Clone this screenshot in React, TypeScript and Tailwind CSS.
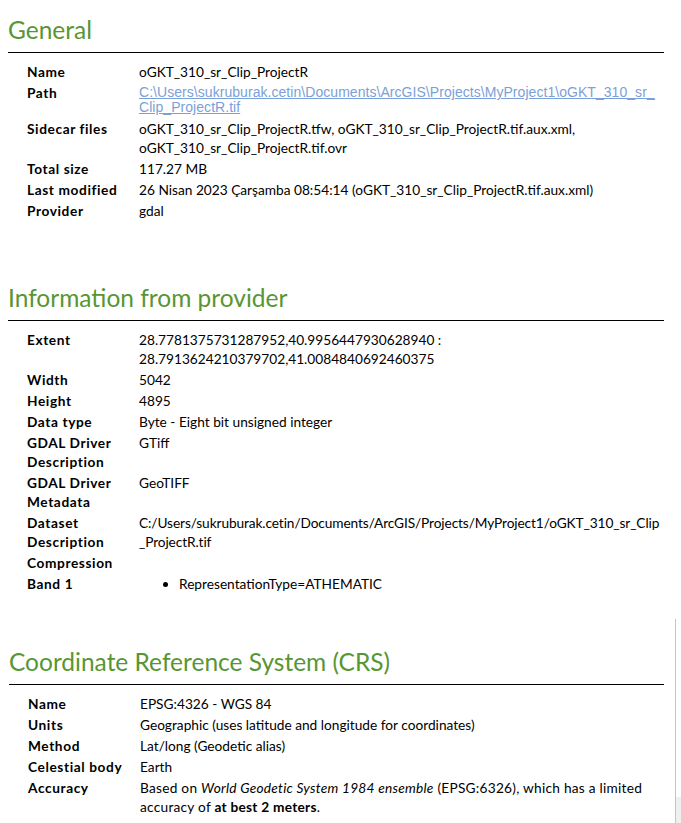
import React from "react";

type Row = {
  label: string;
  value: React.ReactNode;
};

const FONT = "font-['Lato','Noto_Sans',sans-serif]";

const GENERAL: Row[] = [
  { label: "Name", value: "oGKT_310_sr_Clip_ProjectR" },
  {
    label: "Path",
    value: (
      <a
        href="#"
        className="block py-[2px] font-['Liberation_Sans',Arial,sans-serif] text-[14px] tracking-[0.05px] text-[#7b9fd8] underline"
      >
        <span className="block leading-[15px]">
          C:\Users\sukruburak.cetin\Documents\ArcGIS\Projects\MyProject1\oGKT_310_sr_
        </span>
        <span className="block leading-[15px]">Clip_ProjectR.tif</span>
      </a>
    ),
  },
  {
    label: "Sidecar files",
    value: (
      <>
        oGKT_310_sr_Clip_ProjectR.tfw, oGKT_310_sr_Clip_ProjectR.tif.aux.xml,
        <br />
        oGKT_310_sr_Clip_ProjectR.tif.ovr
      </>
    ),
  },
  { label: "Total size", value: "117.27 MB" },
  {
    label: "Last modified",
    value: "26 Nisan 2023 Çarşamba 08:54:14 (oGKT_310_sr_Clip_ProjectR.tif.aux.xml)",
  },
  { label: "Provider", value: "gdal" },
];

const PROVIDER: Row[] = [
  {
    label: "Extent",
    value: (
      <>
        28.7781375731287952,40.9956447930628940 :
        <br />
        28.7913624210379702,41.0084840692460375
      </>
    ),
  },
  { label: "Width", value: "5042" },
  { label: "Height", value: "4895" },
  { label: "Data type", value: "Byte - Eight bit unsigned integer" },
  { label: "GDAL Driver Description", value: "GTiff" },
  { label: "GDAL Driver Metadata", value: "GeoTIFF" },
  {
    label: "Dataset Description",
    value: (
      <span className="tracking-[-0.1px]">
        C:/Users/sukruburak.cetin/Documents/ArcGIS/Projects/MyProject1/oGKT_310_sr_Clip
        <br />
        _ProjectR.tif
      </span>
    ),
  },
  { label: "Compression", value: "" },
  {
    label: "Band 1",
    value: (
      <ul className="list-disc pl-[40px]">
        <li>RepresentationType=ATHEMATIC</li>
      </ul>
    ),
  },
];

const CRS: Row[] = [
  { label: "Name", value: "EPSG:4326 - WGS 84" },
  { label: "Units", value: "Geographic (uses latitude and longitude for coordinates)" },
  { label: "Method", value: "Lat/long (Geodetic alias)" },
  { label: "Celestial body", value: "Earth" },
  {
    label: "Accuracy",
    value: (
      <span className="tracking-[0.25px]">
        Based on <i>World Geodetic System 1984 ensemble</i> (EPSG:6326), which has a limited
        <br />
        accuracy of <b>at best 2 meters</b>.
      </span>
    ),
  },
];

function Section({
  title,
  rows,
  className = "",
}: {
  title: string;
  rows: Row[];
  className?: string;
}) {
  return (
    <section className={className}>
      <h2 className="mr-[17px] border-b border-black pb-[7px] text-[24.5px] leading-[30px] text-[#589632]">
        {title}
      </h2>
      <div className="mt-2 ml-[19px] flex flex-col">
        {rows.map((row) => (
          <div key={row.label} className="flex py-[1px] text-[13.7px] leading-[19px] text-black">
            <div className="w-[112px] shrink-0 pr-2 font-bold tracking-[0.6px]">{row.label}</div>
            <div className="whitespace-nowrap">{row.value}</div>
          </div>
        ))}
      </div>
    </section>
  );
}

export default function App() {
  return (
    <div className={`relative h-[823px] w-[681px] overflow-hidden bg-white pl-2 ${FONT}`}>
      <Section title="General" rows={GENERAL} className="pt-[15px]" />
      <Section title="Information from provider" rows={PROVIDER} className="pt-[62px]" />
      <Section title="Coordinate Reference System (CRS)" rows={CRS} className="pt-[53px] pl-[1px]" />

      {/* edge of a panel lying behind the page */}
      <div className="absolute top-[619px] bottom-0 left-[675px] w-[6px] border-l border-[#c4c4c4]">
        <div className="absolute top-[178px] right-0 bottom-0 left-0 bg-[#f0f0f0]" />
      </div>
    </div>
  );
}
